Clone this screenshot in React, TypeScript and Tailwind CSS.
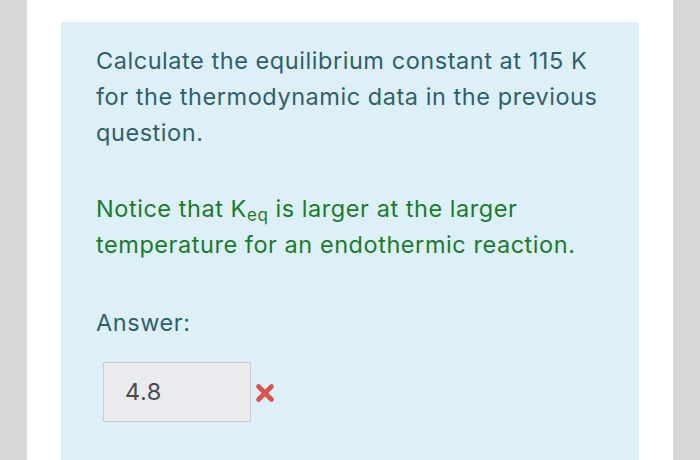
export default function App() {
  return (
    <div
      className="flex h-[460px] w-[700px] overflow-hidden bg-white"
      style={{ fontFamily: 'Inter, "Liberation Sans", Arial, sans-serif' }}
    >
      <div className="w-[27px] shrink-0 bg-[#d9d8d9]" />
      <div className="flex flex-1 px-[34px] pt-[22px]">
        <div className="flex-1 bg-[#ddf0f8] px-[35px] pt-[21px]">
          <p className="text-[23.5px] leading-[36px] tracking-[0.55px] text-[#2f5f6d]">
            Calculate the equilibrium constant at 115 K
            <br />
            for the thermodynamic data in the previous
            <br />
            question.
          </p>
          <p className="mt-[40px] text-[23.5px] leading-[36px] tracking-[0.55px] text-[#1b7a2b]">
            Notice that K<sub className="text-[17px]">eq</sub> is larger at the larger
            <br />
            temperature for an endothermic reaction.
          </p>
          <p className="mt-[42px] text-[23.5px] leading-[36px] tracking-[0.55px] text-[#2f5f6d]">Answer:</p>
          <div className="ml-[7px] mt-[21px] flex items-center">
            <div className="flex h-[60px] w-[148px] items-center border border-[#c9ced4] bg-[#e9ebee] pl-[21px] text-[23.5px] tracking-[0.55px] text-[#484b4f]">
              4.8
            </div>
            <svg width="22" height="22" viewBox="0 0 22 22" className="ml-[3px] mt-[2px]">
              <path d="M4.5 4.5 L17.5 17.5 M17.5 4.5 L4.5 17.5" stroke="#d9534f" strokeWidth="4.6" strokeLinecap="round" />
            </svg>
          </div>
        </div>
      </div>
      <div className="w-[27px] shrink-0 bg-[#d9d8d9]" />
    </div>
  )
}
